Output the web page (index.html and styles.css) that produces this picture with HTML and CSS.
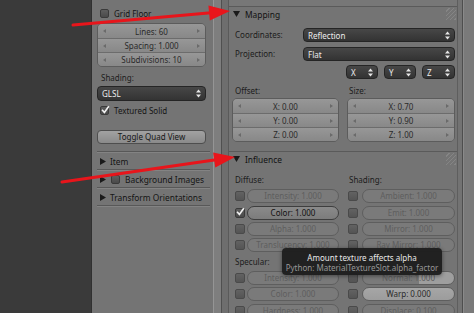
FILE: index.html
```html
<!DOCTYPE html>
<html lang="en">
<head>
    <meta charset="UTF-8">
    <meta name="viewport" content="width=device-width, initial-scale=1.0">
    <title>Texture Mapping and Influence</title>
    <link rel="stylesheet" href="styles.css">
</head>
<body>
    <div class="screen">
        <div class="viewport"></div>

        <!-- tool shelf -->
        <div class="toolshelf">
            <div class="check-row first">
                <span class="checkbox"></span>Grid Floor
            </div>
            <div class="num-stack">
                <div class="num"><i class="arr left"></i><span>Lines: 60</span><i class="arr right"></i></div>
                <div class="num"><i class="arr left"></i><span>Spacing: 1.000</span><i class="arr right"></i></div>
                <div class="num"><i class="arr left"></i><span>Subdivisions: 10</span><i class="arr right"></i></div>
            </div>
            <div class="label shading-label">Shading:</div>
            <div class="menu glsl">
                <span>GLSL</span>
                <svg class="updown" width="5" height="9" viewBox="0 0 5 9"><polygon points="0,3.6 2.5,0.4 5,3.6"/><polygon points="0,5.4 5,5.4 2.5,8.6"/></svg>
            </div>
            <div class="check-row textured">
                <span class="checkbox on"><svg width="10" height="10" viewBox="0 0 10 10"><path d="M2 4.8 L4.4 7.4 L8.8 1.2"/></svg></span>Textured Solid
            </div>
            <div class="button">Toggle Quad View</div>
            <div class="subpanels">
                <div class="sub">
                    <svg class="tri" width="6" height="7" viewBox="0 0 6 7"><polygon points="0,0 6,3.5 0,7"/></svg>Item
                </div>
                <div class="sub">
                    <svg class="tri" width="6" height="7" viewBox="0 0 6 7"><polygon points="0,0 6,3.5 0,7"/></svg><span class="checkbox bg"></span>Background Images
                </div>
                <div class="sub">
                    <svg class="tri" width="6" height="7" viewBox="0 0 6 7"><polygon points="0,0 6,3.5 0,7"/></svg>Transform Orientations
                </div>
                <div class="sub-end"></div>
            </div>
        </div>

        <div class="divider"></div>

        <!-- properties editor -->
        <div class="props">
            <div class="prev"></div>

            <section class="panel mapping">
                <div class="panel-head">
                    <svg class="tri" width="7" height="6" viewBox="0 0 7 6"><polygon points="0,0 7,0 3.5,6"/></svg>Mapping<span class="grip"></span>
                </div>
                <div class="panel-body">
                    <div class="prop-row">
                        <div class="label">Coordinates:</div>
                        <div class="menu"><span>Reflection</span><svg class="updown" width="5" height="9" viewBox="0 0 5 9"><polygon points="0,3.6 2.5,0.4 5,3.6"/><polygon points="0,5.4 5,5.4 2.5,8.6"/></svg></div>
                    </div>
                    <div class="prop-row projection">
                        <div class="label">Projection:</div>
                        <div class="menu"><span>Flat</span><svg class="updown" width="5" height="9" viewBox="0 0 5 9"><polygon points="0,3.6 2.5,0.4 5,3.6"/><polygon points="0,5.4 5,5.4 2.5,8.6"/></svg></div>
                    </div>
                    <div class="axis-row">
                        <div class="menu axis"><span>X</span><svg class="updown" width="5" height="9" viewBox="0 0 5 9"><polygon points="0,3.6 2.5,0.4 5,3.6"/><polygon points="0,5.4 5,5.4 2.5,8.6"/></svg></div>
                        <div class="menu axis"><span>Y</span><svg class="updown" width="5" height="9" viewBox="0 0 5 9"><polygon points="0,3.6 2.5,0.4 5,3.6"/><polygon points="0,5.4 5,5.4 2.5,8.6"/></svg></div>
                        <div class="menu axis wide"><span>Z</span><svg class="updown" width="5" height="9" viewBox="0 0 5 9"><polygon points="0,3.6 2.5,0.4 5,3.6"/><polygon points="0,5.4 5,5.4 2.5,8.6"/></svg></div>
                    </div>
                    <div class="vectors">
                        <div class="vector">
                            <div class="label">Offset:</div>
                            <div class="num-stack">
                                <div class="num"><i class="arr left"></i><span>X: 0.00</span><i class="arr right"></i></div>
                                <div class="num"><i class="arr left"></i><span>Y: 0.00</span><i class="arr right"></i></div>
                                <div class="num"><i class="arr left"></i><span>Z: 0.00</span><i class="arr right"></i></div>
                            </div>
                        </div>
                        <div class="vector">
                            <div class="label size-label">Size:</div>
                            <div class="num-stack">
                                <div class="num"><i class="arr left"></i><span>X: 0.70</span><i class="arr right"></i></div>
                                <div class="num"><i class="arr left"></i><span>Y: 0.90</span><i class="arr right"></i></div>
                                <div class="num"><i class="arr left"></i><span>Z: 1.00</span><i class="arr right"></i></div>
                            </div>
                        </div>
                    </div>
                </div>
            </section>

            <section class="panel influence">
                <div class="panel-head">
                    <svg class="tri" width="7" height="6" viewBox="0 0 7 6"><polygon points="0,0 7,0 3.5,6"/></svg>Influence<span class="grip"></span>
                </div>
                <div class="influence-body">
                    <div class="factor-col left">
                        <div class="label">Diffuse:</div>
                        <div class="factor"><span class="checkbox off"></span><div class="slider off">Intensity: 1.000</div></div>
                        <div class="factor"><span class="checkbox on"><svg width="10" height="10" viewBox="0 0 10 10"><path d="M2 4.8 L4.4 7.4 L8.8 1.2"/></svg></span><div class="slider">Color: 1.000</div></div>
                        <div class="factor"><span class="checkbox off"></span><div class="slider off">Alpha: 1.000</div></div>
                        <div class="factor"><span class="checkbox off"></span><div class="slider off">Translucency: 1.000</div></div>
                        <div class="label">Specular:</div>
                        <div class="factor"><span class="checkbox off"></span><div class="slider off">Intensity: 1.000</div></div>
                        <div class="factor"><span class="checkbox off"></span><div class="slider off">Color: 1.000</div></div>
                        <div class="factor"><span class="checkbox off"></span><div class="slider off">Hardness: 1.000</div></div>
                    </div>
                    <div class="factor-col right">
                        <div class="label">Shading:</div>
                        <div class="factor"><span class="checkbox off"></span><div class="slider off">Ambient: 1.000</div></div>
                        <div class="factor"><span class="checkbox off"></span><div class="slider off">Emit: 1.000</div></div>
                        <div class="factor"><span class="checkbox off"></span><div class="slider off">Mirror: 1.000</div></div>
                        <div class="factor"><span class="checkbox off"></span><div class="slider off">Ray Mirror: 1.000</div></div>
                        <div class="label"></div>
                        <div class="factor"><span class="checkbox off"></span><div class="slider off normal">Normal: 1.000</div></div>
                        <div class="factor"><span class="checkbox off"></span><div class="slider warp">Warp: 0.000</div></div>
                        <div class="factor"><span class="checkbox off"></span><div class="slider off">Displace: 0.100</div></div>
                    </div>
                </div>
            </section>
        </div>

        <div class="edge"></div>
    </div>

    <!-- tooltip over the alpha factor -->
    <div class="tooltip">
        <div class="tip-title">Amount texture affects alpha</div>
        <div class="tip-python">Python: MaterialTextureSlot.alpha_factor</div>
    </div>

    <!-- red annotation arrows -->
    <svg class="annot" width="474" height="313" viewBox="0 0 474 313">
        <line x1="73" y1="25" x2="211" y2="12.8"/>
        <polygon points="230,11 209.8,20.4 208.4,5.4"/>
        <line x1="62" y1="182" x2="216" y2="159.8"/>
        <polygon points="235,157 215.3,167.4 213.1,152.6"/>
    </svg>
</body>
</html>
```

FILE: styles.css
```css
body {
    margin: 0;
    background-color: #3a3a3a;
    font-family: "Noto Sans", "Open Sans", sans-serif;
    font-size: 8px;
    color: #141414;
}

.screen {
    display: flex;
    width: 474px;
    height: 313px;
    overflow: hidden;
}

.viewport {
    flex: none;
    width: 91px;
    background-color: #3a3a3a;
}

/* tool shelf */

.toolshelf {
    flex: none;
    width: 122px;
    box-sizing: border-box;
    background-color: #747474;
    border-left: 1px solid #303030;
    padding: 6px 7px 0 5px;
    display: flex;
    flex-direction: column;
}

.check-row {
    display: flex;
    align-items: center;
    height: 14px;
    padding-left: 3px;
    gap: 5px;
}

.checkbox {
    flex: none;
    position: relative;
    width: 9px;
    height: 9px;
    box-sizing: border-box;
    border: 1px solid #3a3a3a;
    border-radius: 2px;
    background: linear-gradient(#5e5e5e, #4a4a4a);
}

.checkbox svg {
    position: absolute;
    left: -1px;
    top: -2px;
}

.checkbox svg path {
    fill: none;
    stroke: #f2f2f2;
    stroke-width: 1.6;
}

.num-stack {
    margin-top: 3px;
    border: 1px solid #5c5c5c;
    border-radius: 5px;
    overflow: hidden;
}

.num {
    display: flex;
    align-items: center;
    height: 14px;
    box-sizing: border-box;
    padding: 0 5px;
    background: linear-gradient(#979797, #888888);
    color: #2a2a2a;
}

.num + .num {
    border-top: 1px solid #6c6c6c;
}

.num span {
    flex: 1;
    text-align: center;
}

.arr {
    width: 0;
    height: 0;
    border-top: 2.5px solid transparent;
    border-bottom: 2.5px solid transparent;
}

.arr.left {
    border-right: 3px solid #6a6a6a;
}

.arr.right {
    border-left: 3px solid #6a6a6a;
}

.label {
    height: 14px;
    line-height: 14px;
    padding-left: 3px;
    color: #1c1c1c;
}

.shading-label {
    margin-top: 4px;
    padding-left: 4px;
}

.menu {
    display: flex;
    align-items: center;
    justify-content: space-between;
    height: 14px;
    box-sizing: border-box;
    padding: 0 4px;
    border: 1px solid #252525;
    border-radius: 4px;
    background: linear-gradient(#474747, #333333);
    color: #ececec;
}

.updown polygon {
    fill: #e6e6e6;
}

.glsl {
    margin-top: 1px;
    height: 15px;
}

.textured {
    margin-top: 2px;
}

.button {
    margin-top: 13px;
    height: 14px;
    box-sizing: border-box;
    line-height: 12px;
    text-align: center;
    border: 1px solid #4e4e4e;
    border-radius: 4px;
    background: linear-gradient(#a2a2a2, #8a8a8a);
    color: #161616;
}

.subpanels {
    margin-top: 7px;
    margin-right: -4px;
}

.sub,
.sub-end {
    border-top: 1px solid #585858;
    box-shadow: inset 0 1px 0 #838383;
}

.sub {
    display: flex;
    align-items: center;
    height: 18px;
    box-sizing: border-box;
    padding: 1px 0 0 3px;
    font-size: 8.4px;
}

.sub .tri {
    margin-right: 4px;
}

.tri polygon {
    fill: #1a1a1a;
}

.sub .checkbox.bg {
    margin: 0 5px 0 1px;
}

.sub-end {
    height: 2px;
}

.divider {
    flex: none;
    width: 15px;
    background: linear-gradient(to right, #959595 0 1px, #7e7e7e 1px 8px, #505050 8px 9px, #6e6e6e 9px 15px);
}

/* properties editor */

.props {
    flex: none;
    width: 230px;
    box-sizing: border-box;
    background-color: #747474;
    border-left: 1px solid #5a5a5a;
    border-right: 1px solid #5e5e5e;
}

.prev {
    height: 6px;
    background-color: #777777;
    border-bottom: 1px solid #5a5a5a;
}

.panel-head {
    display: flex;
    align-items: center;
    height: 14px;
    padding-left: 4px;
    font-size: 8.4px;
    color: #121212;
}

.panel-head .tri {
    margin-right: 5px;
}

.grip {
    margin-left: auto;
    margin-right: 1px;
    width: 10px;
    height: 12px;
    background: repeating-linear-gradient(135deg, transparent 0 2px, #8c8c8c 2px 3px);
    opacity: 0.7;
}

.panel-body {
    padding: 7px 2px 0 3px;
}

.prop-row {
    display: grid;
    grid-template-columns: 71px 1fr;
}

.projection {
    margin-top: 5px;
}

.axis-row {
    display: flex;
    justify-content: flex-end;
    gap: 6px;
    margin-top: 4px;
}

.menu.axis {
    width: 32px;
}

.menu.axis.wide {
    width: 33px;
}

.vectors {
    display: grid;
    grid-template-columns: 107px 108px;
    column-gap: 8px;
    margin-top: 5px;
}

.vector .num-stack {
    margin-top: 0;
}

.size-label {
    padding-left: 2px;
}

.influence {
    margin-top: 9px;
    border-top: 1px solid #5a5a5a;
}

.influence-body {
    display: grid;
    grid-template-columns: 107px 108px;
    column-gap: 8px;
    padding: 7px 2px 0 3px;
}

.factor-col {
    display: flex;
    flex-direction: column;
    gap: 2.33px;
}

.factor {
    display: flex;
    align-items: center;
    height: 14px;
}

.factor .checkbox {
    width: 10px;
    height: 10px;
}

.left .factor .checkbox {
    margin: 0 2px 0 3px;
}

.right .factor .checkbox {
    margin: 0 4px 0 1px;
}

.right .label {
    padding-left: 2px;
}

.factor .checkbox.off {
    background: linear-gradient(#626262, #545454);
    border-color: #4a4a4a;
}

.slider {
    flex: 1;
    height: 14px;
    box-sizing: border-box;
    line-height: 12px;
    text-align: center;
    border: 1px solid #3e3e3e;
    border-radius: 7px;
    background: linear-gradient(#8a8a8a, #7c7c7c);
    color: #111;
}

.slider.off {
    border-color: #5e5e5e;
    background: #7a7a7a;
    color: #5e5e5e;
}

.slider.normal {
    background: linear-gradient(to right, #7a7a7a 62%, #9e9e9e 62%);
}

.slider.warp {
    border-color: #5e5e5e;
    background: linear-gradient(#a6a6a6, #9c9c9c);
    color: #2a2a2a;
}

.edge {
    flex: none;
    width: 16px;
    background: linear-gradient(to right, #737373 0 4px, #4e4e4e 4px 5px, #8a8a8a 5px 6px, #7a7a7a 6px 16px);
}

/* overlays */

.tooltip {
    position: absolute;
    left: 282px;
    top: 248px;
    width: 160px;
    height: 27px;
    box-sizing: border-box;
    padding-top: 5px;
    border-radius: 4px;
    background-color: rgba(28, 28, 28, 0.95);
    box-shadow: 0 1px 4px rgba(0, 0, 0, 0.45);
    text-align: center;
    line-height: 10px;
}

.tip-title {
    color: #e8e8e8;
}

.tip-python {
    color: #979797;
}

.annot {
    position: absolute;
    left: 0;
    top: 0;
    pointer-events: none;
}

.annot line {
    stroke: #e8151b;
    stroke-width: 3;
    stroke-linecap: round;
}

.annot polygon {
    fill: #e8151b;
}
```
